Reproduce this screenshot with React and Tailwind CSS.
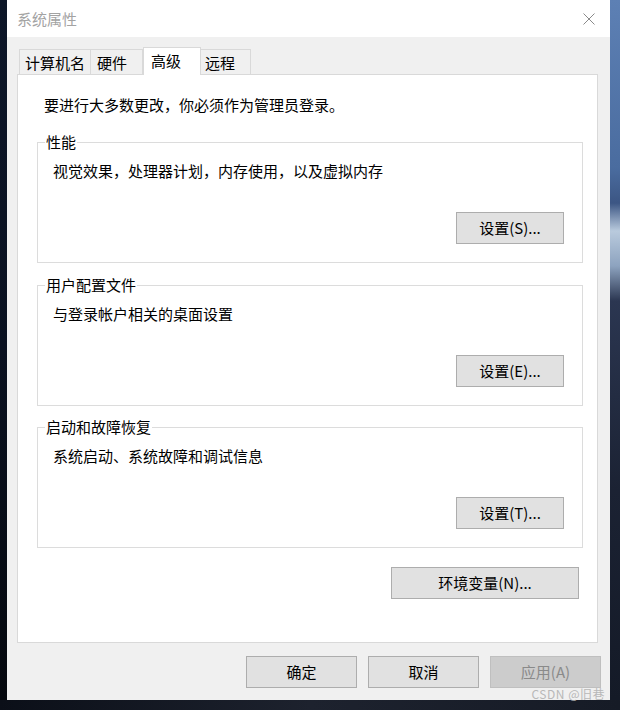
import React from "react";

const TABS = [
  { label: "计算机名", cls: "w-[72px] border-l border-r pl-[5px]" },
  { label: "硬件", cls: "w-[52px] border-r pl-[6px]" },
  { label: "高级", cls: "w-[58px] border-l border-r pl-[7px]", active: true },
  { label: "远程", cls: "w-[50px] border-r pl-[4px]" },
];

const GROUPS = [
  { title: "性能", desc: "视觉效果，处理器计划，内存使用，以及虚拟内存", btn: "设置(S)...", mt: "mt-[17px]" },
  { title: "用户配置文件", desc: "与登录帐户相关的桌面设置", btn: "设置(E)...", mt: "mt-[12px]" },
  { title: "启动和故障恢复", desc: "系统启动、系统故障和调试信息", btn: "设置(T)...", mt: "mt-[11px]" },
];

function WinButton({ children, className = "", disabled }) {
  return (
    <button
      className={`h-[32px] border text-[15px] leading-[20px] flex items-center justify-center ${
        disabled ? "bg-[#cccccc] border-[#bfbfbf] text-[#8a8a8a]" : "bg-[#e1e1e1] border-[#adadad] text-black"
      } ${className}`}
    >
      {children}
    </button>
  );
}

function Group({ g }) {
  return (
    <fieldset className={`${g.mt} ml-[19px] w-[546px] border border-[#dcdcdc] flex flex-col`}>
      <legend className="ml-[7px] px-[1px] text-[15px] leading-[20px] text-black">{g.title}</legend>
      <div className="mt-[9px] pl-[15px] text-[15px] leading-[20px] text-black">{g.desc}</div>
      <WinButton className="self-end mt-[31px] mr-[18px] mb-[18px] w-[108px]">{g.btn}</WinButton>
    </fieldset>
  );
}

export default function App() {
  return (
    <div className="relative w-[620px] h-[710px] flex flex-col bg-[#151a25] font-['Noto_Sans_CJK_SC','Noto_Sans',sans-serif] overflow-hidden">
      <div className="flex h-[700px]">
        <div className="w-[7px] bg-[linear-gradient(180deg,#0d1628_0%,#0a1120_50%,#05080e_100%)]" />

        {/* window */}
        <div className="w-[603px] flex flex-col">
          <div className="h-[37px] bg-white flex items-center justify-between pl-[10px] pr-[15px]">
            <span className="text-[15px] leading-[20px] text-[#a3a3a3]">系统属性</span>
            <svg width="12" height="12" viewBox="0 0 12 12" className="text-[#8a8a8a]">
              <path d="M0.5 0.5 L11.5 11.5 M11.5 0.5 L0.5 11.5" stroke="currentColor" strokeWidth="1" fill="none" />
            </svg>
          </div>

          <div className="flex-1 bg-[#f0f0f0] pt-[10px] pl-[10px] flex flex-col">
            {/* tabs */}
            <div className="relative z-10 flex items-end h-[28px] -mb-px pl-[2px]">
              {TABS.map((t) => (
                <div
                  key={t.label}
                  className={`${t.cls} border-t border-[#d9d9d9] flex items-center text-[15px] leading-[20px] text-black ${
                    t.active ? "h-[28px] bg-white pb-[2px]" : "h-[25px] mb-px bg-[#f0f0f0] pt-[1px]"
                  }`}
                >
                  {t.label}
                </div>
              ))}
            </div>

            {/* panel */}
            <div className="w-[581px] h-[569px] bg-white border border-[#d9d9d9] flex flex-col">
              <div className="pt-[20px] pl-[26px] text-[15px] leading-[20px] text-black">
                要进行大多数更改，你必须作为管理员登录。
              </div>
              {GROUPS.map((g) => (
                <Group key={g.title} g={g} />
              ))}
              <WinButton className="self-end mt-[19px] mr-[18px] w-[188px]">环境变量(N)...</WinButton>
            </div>

            {/* dialog buttons */}
            <div className="mt-[13px] flex justify-end gap-[11px] pr-[9px]">
              <WinButton className="w-[111px]">确定</WinButton>
              <WinButton className="w-[111px]">取消</WinButton>
              <WinButton className="w-[111px]" disabled>应用(A)</WinButton>
            </div>
          </div>
        </div>

        <div className="w-[10px] bg-[linear-gradient(180deg,#5d80b4_0%,#4a6c9f_24%,#3c5684_29%,#b9cadd_33%,#8da3bf_38%,#2b3651_43%,#1b2233_70%,#141a27_100%)]" />
      </div>
      <div className="h-[10px] bg-[linear-gradient(90deg,#0b0f18_0%,#1d222e_50%,#161b26_100%)]" />

      <div className="absolute right-[15px] bottom-[9px] text-[12px] leading-[14px] font-normal tracking-[0.5px] text-[#b8b8b8]">
        CSDN @旧巷
      </div>
    </div>
  );
}
